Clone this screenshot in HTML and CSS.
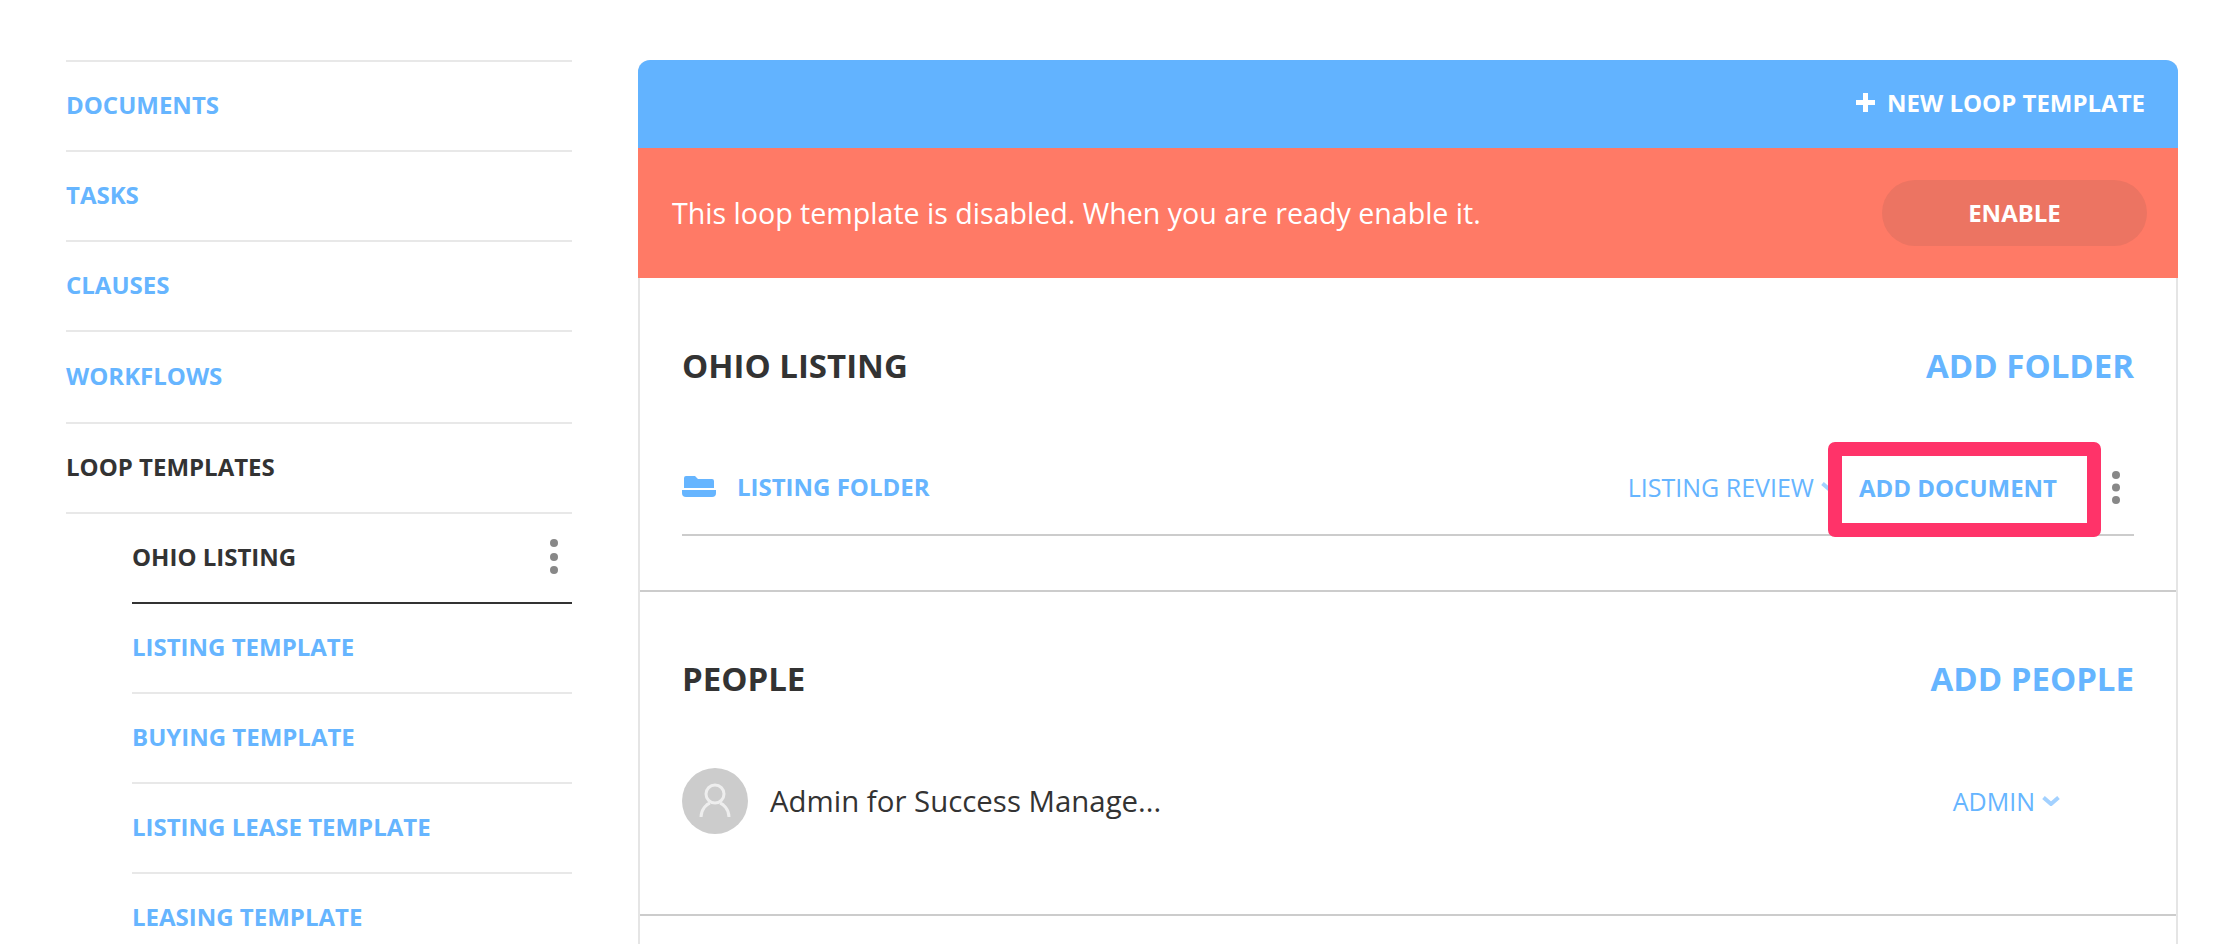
FILE: index.html
```html
<!DOCTYPE html>
<html lang="en">

<head>
    <meta charset="UTF-8">
    <meta name="viewport" content="width=device-width, initial-scale=1.0">
    <title>Loop Templates</title>

    <link rel="stylesheet" href="styles.css">
</head>

<body>
    <aside class="sidebar">
        <ul class="nav-list">
            <li class="nav-row"><a href="#">DOCUMENTS</a></li>
            <li class="nav-row"><a href="#">TASKS</a></li>
            <li class="nav-row"><a href="#">CLAUSES</a></li>
            <li class="nav-row nav-row-tall"><a href="#">WORKFLOWS</a></li>
            <li class="nav-row nav-row-current"><a href="#">LOOP TEMPLATES</a></li>
        </ul>
        <ul class="nav-list sub-list">
            <li class="nav-row nav-row-current nav-row-active">
                <a href="#">OHIO LISTING</a>
                <svg class="dots" width="8" height="36" viewBox="0 0 8 36"><circle cx="4" cy="4" r="4"/><circle cx="4" cy="18" r="4"/><circle cx="4" cy="31" r="4"/></svg>
            </li>
            <li class="nav-row"><a href="#">LISTING TEMPLATE</a></li>
            <li class="nav-row"><a href="#">BUYING TEMPLATE</a></li>
            <li class="nav-row"><a href="#">LISTING LEASE TEMPLATE</a></li>
            <li class="nav-row"><a href="#">LEASING TEMPLATE</a></li>
        </ul>
    </aside>

    <main class="card">
        <div class="top-bar">
            <a href="#" class="new-template"><span class="plus"></span>NEW LOOP TEMPLATE</a>
        </div>

        <div class="disabled-bar">
            <p>This loop template is disabled. When you are ready enable it.</p>
            <button type="button" class="enable-btn">ENABLE</button>
        </div>

        <section class="card-section folder-section">
            <div class="section-head">
                <h2>OHIO LISTING</h2>
                <a href="#" class="section-action">ADD FOLDER</a>
            </div>
            <div class="folder-row">
                <svg class="folder-icon" width="34" height="22" viewBox="0 0 34 22">
                    <path d="M2 3a2 2 0 0 1 2-2h9l3 3h14a2 2 0 0 1 2 2v7H2z"/>
                    <path d="M0 15h34v3a4 4 0 0 1-4 4H4a4 4 0 0 1-4-4z"/>
                </svg>
                <a href="#" class="folder-name">LISTING FOLDER</a>
                <a href="#" class="select-link review-link">LISTING REVIEW
                    <svg class="chevron" width="18" height="10" viewBox="0 0 18 10"><path d="M1.5 1.5 9 8l7.500-6.500"/></svg>
                </a>
                <a href="#" class="add-document">ADD DOCUMENT</a>
                <svg class="dots" width="8" height="33" viewBox="0 0 8 33"><circle cx="4" cy="4" r="4"/><circle cx="4" cy="16.500" r="4"/><circle cx="4" cy="29" r="4"/></svg>
                <div class="highlight-box"></div>
            </div>
        </section>

        <section class="card-section people-section">
            <div class="section-head">
                <h2>PEOPLE</h2>
                <a href="#" class="section-action">ADD PEOPLE</a>
            </div>
            <div class="person-row">
                <div class="avatar">
                    <svg width="32" height="36" viewBox="0 0 32 36"><circle cx="16" cy="11" r="9"/><path d="M2 34c0-8 6-13 9-14M30 34c0-8-6-13-9-14"/></svg>
                </div>
                <span class="person-name">Admin for Success Manage...</span>
                <a href="#" class="select-link role-link">ADMIN
                    <svg class="chevron" width="18" height="10" viewBox="0 0 18 10"><path d="M1.5 1.5 9 8l7.500-6.500"/></svg>
                </a>
            </div>
        </section>
    </main>
</body>

</html>
```

FILE: styles.css
```css
* {
    padding: 0;
    margin: 0;
    box-sizing: border-box;
}

body {
    font-family: 'Open Sans', 'Liberation Sans', sans-serif;
    color: #333;
    background-color: #fff;
    height: 100vh;
    overflow: hidden;
    display: flex;
    column-gap: 66px;
    padding: 60px 60px 0 66px;
}

a {
    color: #66b5ff;
    text-decoration: none;
}

li {
    list-style: none;
}

/* sidebar */

.sidebar {
    width: 506px;
    flex-shrink: 0;
    border-top: 2px solid #e8e8e8;
}

.nav-row {
    height: 90px;
    padding-bottom: 3px;
    border-bottom: 2px solid #e8e8e8;
    display: flex;
    align-items: center;
    justify-content: space-between;
    font-size: 24px;
    font-weight: 700;
}

.nav-row-tall {
    height: 92px;
}

.nav-row-current a {
    color: #333;
}

.nav-row-active {
    border-bottom-color: #333;
}

.nav-row-active .dots {
    margin-right: 14px;
}

.sub-list {
    margin-left: 66px;
}

.dots {
    fill: #888;
    flex-shrink: 0;
}

/* card */

.card {
    width: 1540px;
    flex-shrink: 0;
    border-left: 2px solid #e5e5e5;
    border-right: 2px solid #e5e5e5;
    border-radius: 12px 12px 0 0;
}

.top-bar {
    height: 88px;
    margin: 0 -2px;
    padding: 0 33px 3px 0;
    background-color: #62b3ff;
    border-radius: 12px 12px 0 0;
    display: flex;
    align-items: center;
    justify-content: flex-end;
}

.new-template {
    display: flex;
    align-items: center;
    column-gap: 12px;
    color: #fff;
    font-size: 24px;
    font-weight: 700;
}

.plus {
    width: 19px;
    height: 19px;
    background:
        linear-gradient(#fff, #fff) center / 100% 5px no-repeat,
        linear-gradient(#fff, #fff) center / 5px 100% no-repeat;
}

.disabled-bar {
    height: 130px;
    margin: 0 -2px;
    background-color: #ff7a66;
    display: flex;
    align-items: center;
    justify-content: space-between;
    padding: 0 31px 0 34px;
    color: #fff;
    font-size: 28.6px;
}

.disabled-bar p {
    margin-bottom: 2px;
}

.enable-btn {
    width: 265px;
    height: 66px;
    padding-bottom: 2px;
    border: none;
    border-radius: 33px;
    background-color: #ec7462;
    color: #fff;
    font-family: inherit;
    font-size: 24px;
    font-weight: 700;
}

.card-section {
    border-bottom: 2px solid #ccc;
    padding: 0 42px;
}

.section-head {
    height: 60px;
    padding-bottom: 2px;
    display: flex;
    align-items: center;
    justify-content: space-between;
}

.section-head h2 {
    font-size: 33px;
    font-weight: 700;
}

.section-action {
    font-size: 33px;
    font-weight: 700;
}

.folder-section {
    padding-top: 58px;
    padding-bottom: 54px;
}

.folder-row {
    position: relative;
    height: 90px;
    margin-top: 50px;
    padding: 0 14px 6px 0;
    border-bottom: 2px solid #ccc;
    display: flex;
    align-items: center;
}

.folder-icon {
    fill: #66b5ff;
    flex-shrink: 0;
    margin-bottom: 2px;
}

.folder-name {
    margin-left: 21px;
    margin-bottom: 2px;
    font-size: 24px;
    font-weight: 700;
}

.select-link {
    display: flex;
    align-items: center;
    column-gap: 7px;
    font-size: 25px;
}

.chevron {
    fill: none;
    stroke: #a3d1ff;
    stroke-width: 4;
}

.review-link {
    margin-left: auto;
}

.add-document {
    margin: 0 55px 0 20px;
    font-size: 24px;
    font-weight: 700;
}

/* annotation drawn over the row */
.highlight-box {
    position: absolute;
    right: 33px;
    top: -4px;
    width: 273px;
    height: 95px;
    border: 14px solid #ff3369;
    border-radius: 7px;
}

.people-section {
    padding-top: 57px;
    padding-bottom: 80px;
}

.person-row {
    margin-top: 59px;
    display: flex;
    align-items: center;
}

.avatar {
    width: 66px;
    height: 66px;
    border-radius: 50%;
    background-color: #ccc;
    display: flex;
    align-items: center;
    justify-content: center;
}

.avatar svg {
    fill: none;
    stroke: #eee;
    stroke-width: 3;
}

.person-name {
    margin-left: 22px;
    font-size: 29.4px;
}

.role-link {
    margin-left: auto;
    margin-right: 74px;
}
```
